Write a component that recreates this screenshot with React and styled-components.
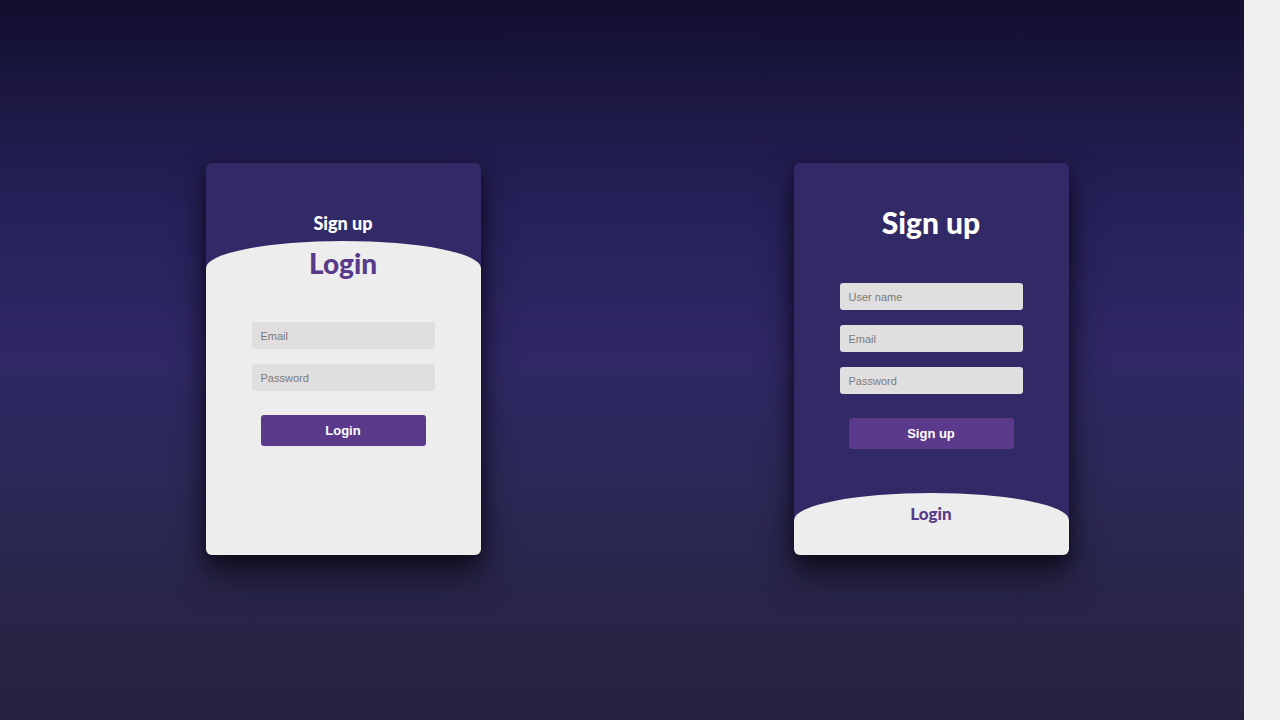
import React from 'react'
import styled, { createGlobalStyle } from 'styled-components'

const GlobalStyle = createGlobalStyle`
  html, body {
    margin: 0;
    padding: 0;
    height: 100%;
  }
  body {
    background: #f0f0f0;
    font-family: 'Liberation Sans', Arial, sans-serif;
  }
`

const Page = styled.div`
  display: flex;
  height: 720px;
  width: 1280px;
`

const Stage = styled.div`
  width: 1244px;
  height: 100%;
  display: flex;
  align-items: center;
  justify-content: center;
  gap: 313px;
  padding-left: 30px;
  padding-bottom: 2px;
  box-sizing: border-box;
  background: linear-gradient(
    to bottom,
    #110e2e 0%,
    #1c1843 14%,
    #27215b 30%,
    #2f2865 50%,
    #2c2858 66%,
    #282548 84%,
    #242140 100%
  );
`

const Strip = styled.div`
  flex: 1;
  background: #f0f0f0;
`

const Card = styled.div`
  position: relative;
  width: 275px;
  height: 392px;
  border-radius: 6px;
  overflow: hidden;
  background: #312a66;
  display: flex;
  flex-direction: column;
  align-items: center;
  box-shadow: 0 20px 34px rgba(0, 0, 0, 0.6), 0 4px 14px rgba(0, 0, 0, 0.4);
`

const Head = styled.div`
  height: 78px;
  width: 100%;
  box-sizing: border-box;
  padding-top: ${p => p.$top || 0}px;
  text-align: center;
`

const Title = styled.div`
  font-family: Lato, 'Noto Sans', sans-serif;
  font-weight: 900;
  font-size: ${p => p.$size}px;
  line-height: ${p => p.$line}px;
  color: ${p => (p.$light ? '#ffffff' : '#573b8a')};
  text-align: center;
  margin-top: ${p => p.$mt || 0}px;
`

const Panel = styled.div`
  width: 100%;
  flex: ${p => (p.$grow ? 1 : 'none')};
  height: ${p => (p.$height ? p.$height + 'px' : 'auto')};
  margin-top: ${p => (p.$bottom ? 'auto' : '0')};
  background: #ededed;
  border-radius: 50% 50% 0 0 / 27px 27px 0 0;
  display: flex;
  flex-direction: column;
  align-items: center;
`

const Form = styled.div`
  display: flex;
  flex-direction: column;
  align-items: center;
  gap: 15px;
  margin-top: ${p => p.$mt || 42}px;
`

const Input = styled.input`
  width: 183px;
  height: 27px;
  box-sizing: border-box;
  border: none;
  outline: none;
  border-radius: 3px;
  background: #e0dedf;
  padding: 0 9px;
  font-family: 'Liberation Sans', Arial, sans-serif;
  font-size: 11px;
  color: #333;

  &::placeholder {
    color: #7b7b7b;
  }
`

const Button = styled.button`
  width: 165px;
  height: 31px;
  margin-top: 9px;
  border: none;
  border-radius: 3px;
  background: #5b3a8c;
  color: #ffffff;
  font-family: 'Liberation Sans', Arial, sans-serif;
  font-weight: 700;
  font-size: 13px;
  cursor: pointer;
`

const LoginCard = () => (
  <Card>
    <Head $top={49}>
      <Title $light $size={18} $line={22}>
        Sign up
      </Title>
    </Head>
    <Panel $grow>
      <Title $size={28} $line={34} $mt={5}>
        Login
      </Title>
      <Form $mt={42}>
        <Input placeholder="Email" />
        <Input type="password" placeholder="Password" />
        <Button>Login</Button>
      </Form>
    </Panel>
  </Card>
)

const SignupCard = () => (
  <Card>
    <Title $light $size={30} $line={36} $mt={41}>
      Sign up
    </Title>
    <Form $mt={43}>
      <Input placeholder="User name" />
      <Input placeholder="Email" />
      <Input type="password" placeholder="Password" />
      <Button>Sign up</Button>
    </Form>
    <Panel $bottom $height={62}>
      <Title $size={17} $line={20} $mt={11}>
        Login
      </Title>
    </Panel>
  </Card>
)

const App = () => (
  <Page>
    <GlobalStyle />
    <Stage>
      <LoginCard />
      <SignupCard />
    </Stage>
    <Strip />
  </Page>
)

export default App
